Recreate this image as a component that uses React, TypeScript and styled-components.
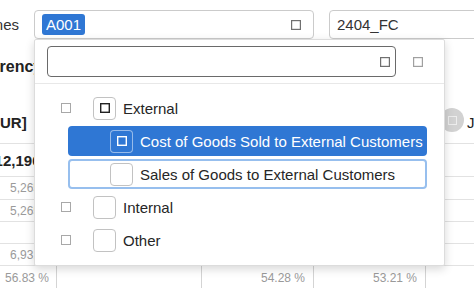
import React from "react";
import styled, { createGlobalStyle } from "styled-components";

const GlobalStyle = createGlobalStyle`
  html, body { margin: 0; padding: 0; background: #fff; }
  body {
    font-family: "Liberation Sans", Arial, Helvetica, sans-serif;
    color: #2b2b2b;
    overflow: hidden;
  }
  * { box-sizing: border-box; }
`;

const BLUE = "#2f77d4";

const Page = styled.div`
  position: relative;
  width: 474px;
  height: 288px;
  overflow: hidden;
  background: #fff;
`;

const TopBar = styled.div`
  display: flex;
  align-items: center;
  padding-top: 10px;
`;

const FieldLabel = styled.div`
  flex: none;
  width: 34px;
  padding-right: 15px;
  display: flex;
  justify-content: flex-end;
  overflow: hidden;
  white-space: nowrap;
  font-size: 15px;
  color: #333;
`;

const SelectBox = styled.div<{ $width: number; $grow?: boolean }>`
  position: relative;
  flex: none;
  width: ${(p) => p.$width}px;
  height: 29px;
  margin-left: ${(p) => (p.$grow ? 15 : 0)}px;
  border: 1px solid #cbcbcb;
  border-radius: 4px;
  display: flex;
  align-items: center;
  padding: 0 12px 0 7px;
  font-size: 15px;
  color: #333;
  white-space: nowrap;
`;

const Tag = styled.span`
  background: ${BLUE};
  color: #fff;
  height: 21px;
  line-height: 21px;
  padding: 0 4px;
  border-radius: 3px;
  font-size: 15px;
`;

const Spacer = styled.div`
  flex: 1;
`;

const Popover = styled.div`
  position: absolute;
  top: calc(100% + 1px);
  left: -1px;
  width: 411px;
  background: #fff;
  border: 1px solid #dcdcdc;
  border-radius: 2px;
  box-shadow: 0 3px 10px rgba(0, 0, 0, 0.16);
  z-index: 10;
`;

const SearchRow = styled.div`
  display: flex;
  align-items: center;
  padding: 6px 0 6px 12px;
  border-bottom: 1px solid #e8e8e8;
`;

const SearchInput = styled.div`
  width: 349px;
  height: 31px;
  border: 1px solid #6a6a6a;
  border-radius: 4px;
  display: flex;
  align-items: center;
  justify-content: flex-end;
  padding-right: 5px;
`;

const ClearIcon = styled.div`
  margin-left: 17px;
  display: flex;
`;

const TreeList = styled.div`
  display: flex;
  flex-direction: column;
  gap: 3px;
  padding: 9px 17px 10px 16px;
`;

const TreeRow = styled.div<{ $depth: number; $selected?: boolean; $focused?: boolean }>`
  display: flex;
  align-items: center;
  height: 30px;
  margin-left: ${(p) => p.$depth * 17}px;
  padding-left: 10px;
  border-radius: 4px;
  background: ${(p) => (p.$selected ? BLUE : "transparent")};
  color: ${(p) => (p.$selected ? "#fff" : "#262626")};
  box-shadow: ${(p) => (p.$focused ? "inset 0 0 0 2px #97bfee" : "none")};
  white-space: nowrap;
`;

const Expander = styled.div`
  flex: none;
  width: 10px;
  height: 10px;
  display: flex;
`;

const Check = styled.div<{ $selected?: boolean }>`
  flex: none;
  margin-left: 22px;
  width: 23px;
  height: 23px;
  border-radius: 4px;
  border: 1px solid ${(p) => (p.$selected ? "rgba(255,255,255,0.5)" : "#c2c2c2")};
  background: ${(p) => (p.$selected ? BLUE : "#fff")};
  display: flex;
  align-items: center;
  justify-content: center;
`;

const RowText = styled.span`
  margin-left: 7px;
  font-size: 15px;
`;

const Heading = styled.div`
  margin: 18px 0 0 -28px;
  font-size: 16px;
  line-height: 20px;
  font-weight: bold;
  color: #222;
  white-space: nowrap;
`;

const Table = styled.div`
  margin: 23px 0 0 -23px;
  display: flex;
  flex-direction: column;
`;

const Row = styled.div<{ $h: number; $last?: boolean }>`
  display: grid;
  grid-template-columns: 80px 145px 112px 112px 140px;
  height: ${(p) => p.$h}px;
  border-bottom: ${(p) => (p.$last ? "none" : "1px solid #e2e2e2")};
`;

const Cell = styled.div<{ $start?: boolean; $bold?: boolean; $ruled?: boolean; $pr?: number }>`
  display: flex;
  align-items: center;
  justify-content: ${(p) => (p.$start ? "flex-start" : "flex-end")};
  padding: 0 ${(p) => p.$pr ?? 7}px 0 8px;
  font-size: ${(p) => (p.$bold ? 15 : 12)}px;
  font-weight: ${(p) => (p.$bold ? "bold" : "normal")};
  color: ${(p) => (p.$bold ? "#222" : "#9a9a9a")};
  border-right: ${(p) => (p.$ruled ? "1px solid #d4d4d4" : "none")};
  white-space: nowrap;
  overflow: hidden;
`;

const HeadCell = styled.div<{ $pl?: number }>`
  display: flex;
  align-items: center;
  padding: 2px 0 0 ${(p) => p.$pl ?? 8}px;
  font-size: 15px;
  font-weight: bold;
  color: #222;
  white-space: nowrap;
  overflow: hidden;
`;

const Avatar = styled.div`
  flex: none;
  align-self: flex-start;
  margin-top: 6px;
  width: 24px;
  height: 24px;
  border-radius: 50%;
  background: #d2d2d2;
  display: flex;
  align-items: center;
  justify-content: center;
`;

const AvatarText = styled.span`
  margin-left: 3px;
  font-weight: normal;
`;

const Square: React.FC<{ color: string; size?: number; stroke?: number }> = ({
  color,
  size = 10,
  stroke = 1.2,
}) => (
  <svg width={size} height={size} viewBox={`0 0 ${size} ${size}`}>
    <rect
      x={stroke / 2}
      y={stroke / 2}
      width={size - stroke}
      height={size - stroke}
      fill="none"
      stroke={color}
      strokeWidth={stroke}
    />
  </svg>
);

type Node = {
  label: string;
  depth: number;
  expander?: boolean;
  checkIcon?: boolean;
  selected?: boolean;
  focused?: boolean;
};

const nodes: Node[] = [
  { label: "External", depth: 0, expander: true, checkIcon: true },
  { label: "Cost of Goods Sold to External Customers", depth: 1, checkIcon: true, selected: true },
  { label: "Sales of Goods to External Customers", depth: 1, focused: true },
  { label: "Internal", depth: 0, expander: true },
  { label: "Other", depth: 0, expander: true },
];

export default function App() {
  return (
    <Page>
      <GlobalStyle />
      <TopBar>
        <FieldLabel>Planning Lines</FieldLabel>
        <SelectBox $width={280}>
          <Tag>A001</Tag>
          <Spacer />
          <Square color="#707070" />
          <Popover>
            <SearchRow>
              <SearchInput>
                <Square color="#707070" />
              </SearchInput>
              <ClearIcon>
                <Square color="#a0a0a0" />
              </ClearIcon>
            </SearchRow>
            <TreeList>
              {nodes.map((n) => (
                <TreeRow key={n.label} $depth={n.depth} $selected={n.selected} $focused={n.focused}>
                  <Expander>{n.expander && <Square color="#a8a8a8" stroke={1} />}</Expander>
                  <Check $selected={n.selected}>
                    {n.checkIcon && <Square color={n.selected ? "#fff" : "#222"} stroke={1.4} />}
                  </Check>
                  <RowText>{n.label}</RowText>
                </TreeRow>
              ))}
            </TreeList>
          </Popover>
        </SelectBox>
        <SelectBox $width={200} $grow>
          2404_FC
        </SelectBox>
      </TopBar>

      <Heading>Currency</Heading>

      <Table>
        <Row $h={44}>
          <HeadCell>[EUR]</HeadCell>
          <HeadCell />
          <HeadCell />
          <HeadCell />
          <HeadCell $pl={14}>
            <Avatar>
              <Square color="#ededed" size={9} stroke={1} />
            </Avatar>
            <AvatarText>Jan 2024</AvatarText>
          </HeadCell>
        </Row>
        <Row $h={33}>
          <Cell $bold $pr={4}>112,196.2</Cell>
          <Cell />
          <Cell />
          <Cell />
          <Cell />
        </Row>
        <Row $h={23}>
          <Cell>5,265.3</Cell>
          <Cell />
          <Cell />
          <Cell />
          <Cell />
        </Row>
        <Row $h={22}>
          <Cell>5,265.3</Cell>
          <Cell />
          <Cell />
          <Cell />
          <Cell />
        </Row>
        <Row $h={22}>
          <Cell />
          <Cell />
          <Cell />
          <Cell />
          <Cell />
        </Row>
        <Row $h={22}>
          <Cell>6,931.0</Cell>
          <Cell />
          <Cell />
          <Cell />
          <Cell />
        </Row>
        <Row $h={24} $last>
          <Cell $ruled>56.83 %</Cell>
          <Cell $ruled />
          <Cell $ruled $pr={8}>54.28 %</Cell>
          <Cell $ruled $pr={8}>53.21 %</Cell>
          <Cell />
        </Row>
      </Table>
    </Page>
  );
}
